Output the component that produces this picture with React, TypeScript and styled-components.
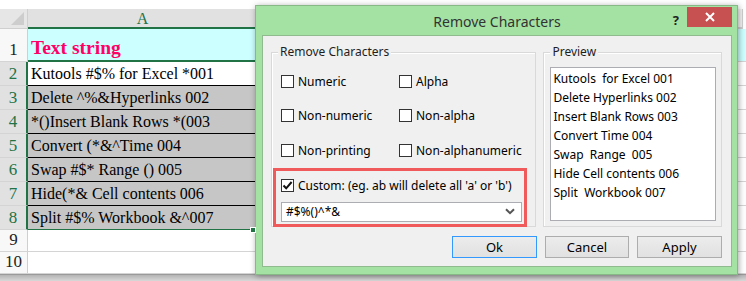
import styled, { createGlobalStyle } from 'styled-components';

const GlobalStyle = createGlobalStyle`
  html, body {
    margin: 0;
    padding: 0;
    background: #ffffff;
    overflow: hidden;
  }
  * {
    box-sizing: border-box;
  }
`;

const ROWS = [
  'Kutools #$% for Excel *001',
  'Delete ^%&Hyperlinks 002',
  '*()Insert Blank Rows *(003',
  'Convert (*&^Time 004',
  'Swap #$* Range () 005',
  'Hide(*& Cell contents 006',
  'Split #$% Workbook &^007',
];

const PREVIEW = [
  'Kutools  for Excel 001',
  'Delete Hyperlinks 002',
  'Insert Blank Rows 003',
  'Convert Time 004',
  'Swap  Range  005',
  'Hide Cell contents 006',
  'Split  Workbook 007',
];

const OPTIONS = [
  'Numeric',
  'Alpha',
  'Non-numeric',
  'Non-alpha',
  'Non-printing',
  'Non-alphanumeric',
];

const Screen = styled.div`
  position: relative;
  width: 746px;
  height: 281px;
  overflow: hidden;
  background: #ffffff;
  display: flex;
  flex-direction: column;
`;

const Sheet = styled.div`
  height: 275px;
  padding-top: 9px;
  overflow: hidden;
  font-family: 'Liberation Serif', 'Times New Roman', serif;
  border-bottom: 1px solid #9a9a9a;
`;

const ShadowBand = styled.div`
  flex: 1;
  background: linear-gradient(#b4b4b4, #d8d8d8);
`;

const HeaderRow = styled.div`
  display: flex;
  height: 20px;
`;

const Corner = styled.div`
  width: 28px;
  background: #e6e6e6;
  border-right: 1px solid #cfcfcf;
  border-bottom: 1px solid #cfcfcf;
  position: relative;
  &::after {
    content: '';
    position: absolute;
    right: 3px;
    bottom: 3px;
    border-left: 13px solid transparent;
    border-bottom: 13px solid #cdcdcd;
  }
`;

const ColHeader = styled.div<{ $w: number; $selected?: boolean }>`
  width: ${(p) => p.$w}px;
  flex: none;
  background: ${(p) => (p.$selected ? '#e1e1e1' : '#f4f4f4')};
  color: ${(p) => (p.$selected ? '#217346' : '#444')};
  border-bottom: 2px solid ${(p) => (p.$selected ? '#217346' : '#cfcfcf')};
  border-right: 1px solid #cfcfcf;
  font-size: 16px;
  line-height: 20px;
  text-align: center;
`;

const Row = styled.div<{ $h: number }>`
  display: flex;
  height: ${(p) => p.$h}px;
`;

const RowHeader = styled.div<{ $selected?: boolean }>`
  width: 28px;
  flex: none;
  background: ${(p) => (p.$selected ? '#e1e1e1' : '#f8f8f8')};
  color: ${(p) => (p.$selected ? '#217346' : '#222')};
  border-bottom: 1px solid #d4d4d4;
  border-right: ${(p) => (p.$selected ? '2px solid #217346' : '1px solid #cfcfcf')};
  font-size: 17px;
  display: flex;
  align-items: flex-end;
  justify-content: center;
  padding-bottom: 1px;
`;

const Cell = styled.div<{ $bg?: string; $line?: string }>`
  width: 230px;
  flex: none;
  background: ${(p) => p.$bg || '#ffffff'};
  border-bottom: 1px solid ${(p) => p.$line || '#d4d4d4'};
  border-right: 1px solid #d4d4d4;
  font-size: 16px;
  color: #000;
  display: flex;
  align-items: flex-end;
  padding: 0 0 2px 3px;
  white-space: nowrap;
  position: relative;
`;

const TitleCell = styled(Cell)`
  font-size: 19.5px;
  font-weight: bold;
  color: #ff0066;
  padding-bottom: 1px;
  border-bottom: 2px solid #217346;
`;

const RestCell = styled.div<{ $bg?: string; $line?: string }>`
  flex: 1;
  background: ${(p) => p.$bg || '#ffffff'};
  border-bottom: 1px solid ${(p) => p.$line || '#d4d4d4'};
`;

const FillHandle = styled.div`
  position: absolute;
  right: 1px;
  bottom: -4px;
  width: 6px;
  height: 6px;
  background: #217346;
  border: 1px solid #ffffff;
  z-index: 1;
`;

/* ---------- dialog ---------- */

const Dialog = styled.div`
  position: absolute;
  left: 255px;
  top: 5px;
  width: 483px;
  height: 270px;
  background: #a3e2a3;
  border: 1px solid #86b986;
  box-shadow: 1px 1px 6px rgba(0, 0, 0, 0.35);
  display: flex;
  flex-direction: column;
  padding: 0 5px 7px 6px;
  font-family: 'Noto Sans', 'Open Sans', sans-serif;
`;

const TitleBar = styled.div`
  height: 29px;
  display: flex;
  align-items: flex-start;
  position: relative;
`;

const Title = styled.div`
  position: absolute;
  left: 120px;
  right: 120px;
  top: 6px;
  text-align: center;
  font-size: 14px;
  color: #333333;
`;

const Help = styled.div`
  margin-left: auto;
  margin-top: 5px;
  margin-right: 8px;
  font-size: 13px;
  font-weight: bold;
  color: #222;
  position: relative;
`;

const Close = styled.div`
  width: 45px;
  height: 20px;
  margin-top: 1px;
  background: #c75050;
  display: flex;
  align-items: center;
  justify-content: center;
  position: relative;
`;

const Panel = styled.div`
  flex: 1;
  background: #f0f0f0;
  border: 1px solid #8fbb8f;
  padding: 16px 9px 0 8px;
  display: flex;
  flex-direction: column;
  font-size: 12px;
  color: #000;
`;

const Groups = styled.div`
  display: flex;
  gap: 7px;
`;

const GroupBox = styled.div<{ $w: number }>`
  position: relative;
  width: ${(p) => p.$w}px;
  height: 175px;
  border: 1px solid #d9d9d9;
  box-shadow: inset 1px 1px 0 #ffffff;
`;

const Legend = styled.span`
  position: absolute;
  left: 6px;
  top: -10px;
  padding: 0 2px;
  background: #f0f0f0;
  color: #1e1e1e;
  line-height: 18px;
`;

const OptionsGrid = styled.div`
  display: grid;
  grid-template-columns: 118px 1fr;
  grid-auto-rows: 34.5px;
  padding: 11px 0 0 9px;
`;

const Option = styled.label`
  display: flex;
  align-items: center;
  gap: 4px;
  white-space: nowrap;
`;

const Box = styled.span`
  width: 13px;
  height: 13px;
  flex: none;
  border: 1px solid #333333;
  background: #ffffff;
  display: flex;
  align-items: center;
  justify-content: center;
`;

const CustomBox = styled.div`
  margin: 0 8px 0 1px;
  height: 59px;
  border: 3px solid #f05a5a;
  padding: 6px 2px 2px 5px;
  display: flex;
  flex-direction: column;
  gap: 7px;
`;

const CustomRow = styled(Option)`
  height: 18px;
`;

const Combo = styled.div`
  height: 20px;
  background: #ffffff;
  border: 1px solid #abadb3;
  display: flex;
  align-items: center;
  justify-content: space-between;
  padding: 0 6px 0 4px;
`;

const ListBox = styled.div`
  margin: 14px 5px 0 6px;
  height: 154px;
  background: #ffffff;
  border: 1px solid #abadb3;
  padding: 1px 0 0 2px;
  line-height: 19px;
`;

const ListItem = styled.div`
  white-space: pre;
`;

const ButtonRow = styled.div`
  display: flex;
  justify-content: flex-end;
  gap: 8px;
  margin-top: 9px;
`;

const Button = styled.div<{ $w: number; $focus?: boolean }>`
  width: ${(p) => p.$w}px;
  height: 22px;
  border: 1px solid ${(p) => (p.$focus ? '#3399ff' : '#adadad')};
  background: linear-gradient(#ececec, #e1e1e1);
  display: flex;
  align-items: center;
  justify-content: center;
  font-size: 13px;
  color: #000;
`;

const CheckMark = () => (
  <svg width="11" height="11" viewBox="0 0 11 11">
    <path d="M1.5 5.5 L4.2 8.3 L9.6 2" fill="none" stroke="#111" strokeWidth="2" />
  </svg>
);

const Chevron = () => (
  <svg width="10" height="7" viewBox="0 0 10 7">
    <path d="M1 1.2 L5 5.2 L9 1.2" fill="none" stroke="#555" strokeWidth="2" />
  </svg>
);

const CloseIcon = () => (
  <svg width="10" height="10" viewBox="0 0 10 10">
    <path d="M1 1 L9 9 M9 1 L1 9" stroke="#ffffff" strokeWidth="2" />
  </svg>
);

export default function App() {
  return (
    <>
      <GlobalStyle />
      <Screen>
        <Sheet>
          <HeaderRow>
            <Corner />
            <ColHeader $w={230} $selected>
              A
            </ColHeader>
            <ColHeader $w={485} />
          </HeaderRow>
          <Row $h={33}>
            <RowHeader>1</RowHeader>
            <TitleCell $bg="#ccffff">Text string</TitleCell>
            <RestCell $bg="#ccffff" />
          </Row>
          {ROWS.map((text, i) => (
            <Row $h={24} key={text}>
              <RowHeader $selected>{i + 2}</RowHeader>
              <Cell $bg={i === 0 ? '#ffffff' : '#c6c6c6'} $line={i === 6 ? '#217346' : '#000000'}>
                {text}
                {i === 6 && <FillHandle />}
              </Cell>
              <RestCell />
            </Row>
          ))}
          {[9, 10].map((n) => (
            <Row $h={22} key={n}>
              <RowHeader>{n}</RowHeader>
              <Cell />
              <RestCell />
            </Row>
          ))}
          <Row $h={22}>
            <RowHeader />
            <Cell />
            <RestCell />
          </Row>
        </Sheet>
        <ShadowBand />

        <Dialog>
          <TitleBar>
            <Title>Remove Characters</Title>
            <Help>?</Help>
            <Close>
              <CloseIcon />
            </Close>
          </TitleBar>
          <Panel>
            <Groups>
              <GroupBox $w={266}>
                <Legend>Remove Characters</Legend>
                <OptionsGrid>
                  {OPTIONS.map((o) => (
                    <Option key={o}>
                      <Box />
                      {o}
                    </Option>
                  ))}
                </OptionsGrid>
                <CustomBox>
                  <CustomRow>
                    <Box>
                      <CheckMark />
                    </Box>
                    Custom: (eg. ab will delete all 'a' or 'b')
                  </CustomRow>
                  <Combo>
                    <span>#$%()^*&amp;</span>
                    <Chevron />
                  </Combo>
                </CustomBox>
              </GroupBox>
              <GroupBox $w={179}>
                <Legend>Preview</Legend>
                <ListBox>
                  {PREVIEW.map((p) => (
                    <ListItem key={p}>{p}</ListItem>
                  ))}
                </ListBox>
              </GroupBox>
            </Groups>
            <ButtonRow>
              <Button $w={85} $focus>
                Ok
              </Button>
              <Button $w={84}>Cancel</Button>
              <Button $w={85}>Apply</Button>
            </ButtonRow>
          </Panel>
        </Dialog>
      </Screen>
    </>
  );
}
